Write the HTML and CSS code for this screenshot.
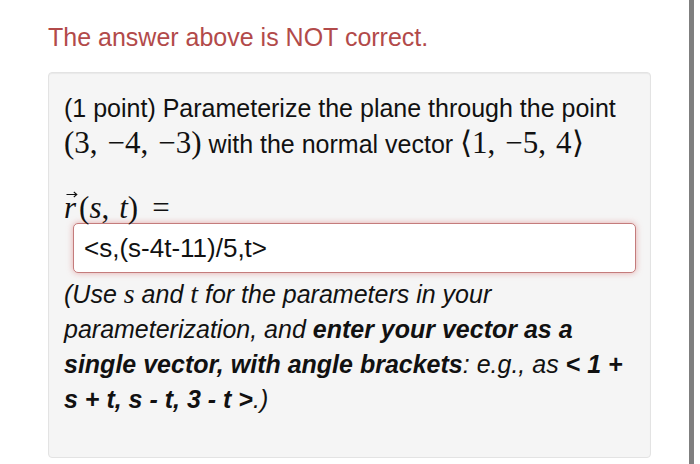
FILE: index.html
```html
<!DOCTYPE html>
<html>
<head>
<meta charset="utf-8">
<link rel="stylesheet" href="styles.css">
</head>
<body>
<div class="page">
  <main class="main">
    <p class="error">The answer above is NOT correct.</p>
    <div class="well">
      <p class="q">(1 point) Parameterize the plane through the point <span class="m">(3,<span class="sp"></span>&minus;4,<span class="sp"></span>&minus;3)</span> with the normal vector <span class="m">&#x27E8;1,<span class="sp"></span>&minus;5,<span class="sp"></span>4&#x27E9;</span></p>
      <p class="rline"><span class="m big"><span class="vec"><i>r</i><svg class="arrow" width="12" height="7" viewBox="0 0 12 7"><path d="M0.5 3.5H10.5M7.8 1L10.8 3.5L7.8 6" fill="none" stroke="#111" stroke-width="1.1"/></svg></span>(<i>s</i>,<span class="sp"></span><i>t</i>)<span class="eq">=</span></span></p>
      <div class="answer">&lt;s,(s-4t-11)/5,t&gt;</div>
      <p class="help">(Use <span class="mi">s</span> and <span class="mi">t</span> for the parameters in your parameterization, and <b>enter your vector as a single vector, with angle brackets</b>: e.g., as <b>&lt; 1 + s + t, s - t, 3 - t &gt;</b>.)</p>
    </div>
  </main>
  <div class="edge"></div>
</div>
</body>
</html>
```
FILE: styles.css
```css
html, body {
  margin: 0;
  padding: 0;
  background: #fff;
}
.page {
  display: flex;
  width: 700px;
  height: 464px;
  overflow: hidden;
}
.main {
  width: 689px;
  padding-left: 48px;
  box-sizing: border-box;
  font-family: "Liberation Sans", Arial, sans-serif;
  color: #111;
}
.error {
  margin: 23px 0 0 0;
  font-size: 25px;
  line-height: 28px;
  color: #b24a4a;
}
.well {
  margin-top: 21px;
  width: 603px;
  height: 386px;
  box-sizing: border-box;
  background: #f5f5f5;
  border: 1px solid #e3e3e3;
  border-radius: 4px;
  box-shadow: inset 0 1px 1px rgba(0,0,0,0.05);
  padding: 17px 14px 0 15px;
}
.q {
  margin: 0;
  font-size: 25px;
  line-height: 36px;
}
.m {
  font-family: "Liberation Serif", "Times New Roman", serif;
  font-size: 31px;
  line-height: 1;
}
.m.big {
  font-size: 31px;
}
.sp {
  display: inline-block;
  width: 10px;
}
.m i, .mi {
  font-family: "Liberation Serif", "Times New Roman", serif;
  font-style: italic;
}
.mi {
  font-size: 28px;
  line-height: 1;
}
.rline {
  margin: 30px 0 0 0;
  line-height: 30px;
  height: 30px;
}
.vec {
  position: relative;
  display: inline-block;
  padding-right: 3px;
}
.arrow {
  position: absolute;
  left: 2px;
  top: -1px;
}
.eq {
  margin-left: 14px;
}
.answer {
  margin: 1px 0 0 9px;
  width: 563px;
  height: 50px;
  box-sizing: border-box;
  background: #fff;
  border: 1px solid #c47c7c;
  border-radius: 5px;
  box-shadow: 0 0 6px rgba(220,120,120,0.6);
  padding: 0 10px;
  font-size: 26px;
  line-height: 48px;
}
.help {
  margin: 4px 0 0 0;
  font-size: 25px;
  line-height: 35px;
  font-style: italic;
}
.help b {
  font-weight: bold;
}
.edge {
  width: 5px;
  height: 464px;
  background: #7f7f7f;
}
```
